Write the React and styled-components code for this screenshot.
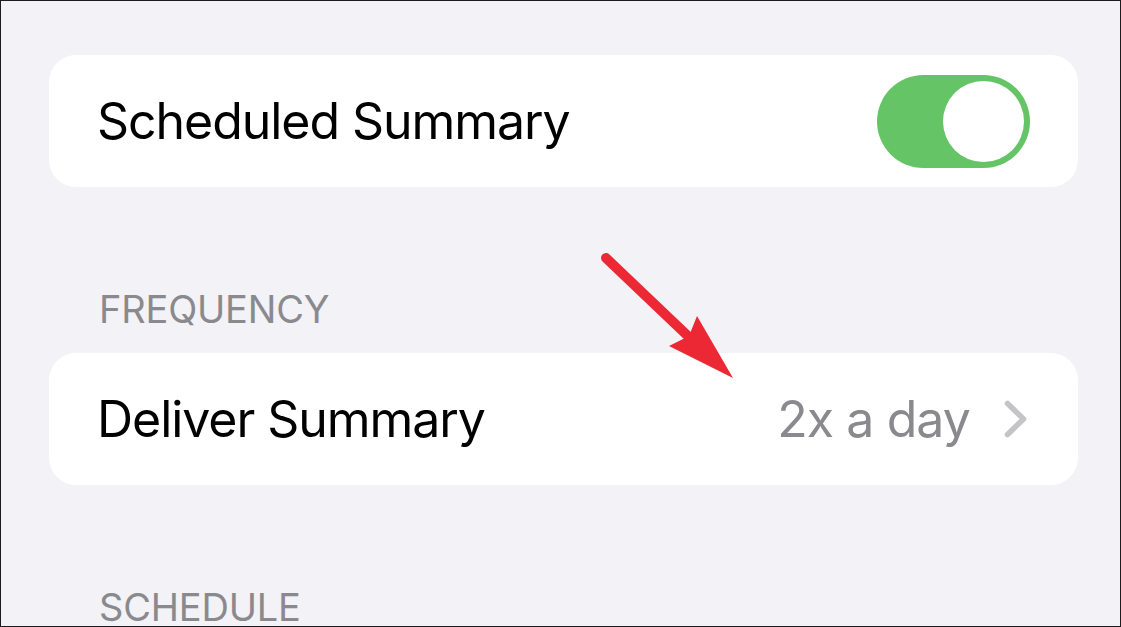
import React from "react";
import styled, { createGlobalStyle } from "styled-components";

const GlobalStyle = createGlobalStyle`
  * { box-sizing: border-box; }
  body {
    margin: 0;
    background: #f2f2f7;
    font-family: Inter, "Noto Sans", "Liberation Sans", sans-serif;
    -webkit-font-smoothing: antialiased;
  }
`;

const Screen = styled.div`
  position: relative;
  width: 1121px;
  height: 627px;
  overflow: hidden;
  border: 1px solid #1c1c1e;
  background: #f2f2f7;
  padding: 54px 42px 0 48px;
  display: flex;
  flex-direction: column;
`;

const Card = styled.div`
  height: 132px;
  background: #ffffff;
  border-radius: 27px;
  padding: 0 48px;
  display: flex;
  align-items: center;
  justify-content: space-between;
  flex-shrink: 0;
`;

const Label = styled.span`
  font-size: 50px;
  letter-spacing: -1.05px;
  color: #000;
`;

const SectionHeader = styled.div`
  margin: 92px 0 14px 50px;
  height: 60px;
  line-height: 60px;
  font-size: 38px;
  letter-spacing: -0.2px;
  color: #8a8a8e;
  text-transform: uppercase;
  flex-shrink: 0;
`;

const Toggle = styled.div`
  width: 153px;
  height: 93px;
  border-radius: 47px;
  background: #65c466;
  padding: 6px;
  display: flex;
  justify-content: ${(p) => (p.$on ? "flex-end" : "flex-start")};
`;

const Knob = styled.div`
  width: 81px;
  height: 81px;
  border-radius: 50%;
  background: #ffffff;
`;

const Detail = styled.div`
  display: flex;
  align-items: center;
  gap: 34px;
  margin-right: 2px;
`;

const Value = styled.span`
  font-size: 50px;
  letter-spacing: -0.9px;
  color: #8a8a8e;
`;

const Overlay = styled.svg`
  position: absolute;
  left: -1px;
  top: -1px;
  pointer-events: none;
`;

function Chevron() {
  return (
    <svg width="24" height="38" viewBox="0 0 24 38">
      <path
        d="M3.5 3.5 L19.5 19 L3.5 34.5"
        fill="none"
        stroke="#c4c4c7"
        strokeWidth="5.5"
        strokeLinecap="round"
        strokeLinejoin="round"
      />
    </svg>
  );
}

export default function App() {
  return (
    <>
      <GlobalStyle />
      <Screen>
        <Card>
          <Label>Scheduled Summary</Label>
          <Toggle $on>
            <Knob />
          </Toggle>
        </Card>

        <SectionHeader>Frequency</SectionHeader>
        <Card>
          <Label>Deliver Summary</Label>
          <Detail>
            <Value>2x a day</Value>
            <Chevron />
          </Detail>
        </Card>

        <SectionHeader>Schedule</SectionHeader>

        <Overlay width="1121" height="627" viewBox="0 0 1121 627">
          <line
            x1="606"
            y1="258"
            x2="690"
            y2="338"
            stroke="#ec2834"
            strokeWidth="10"
            strokeLinecap="round"
          />
          <polygon points="733,378 669,346 689,336 697,316" fill="#ec2834" />
        </Overlay>
      </Screen>
    </>
  );
}
